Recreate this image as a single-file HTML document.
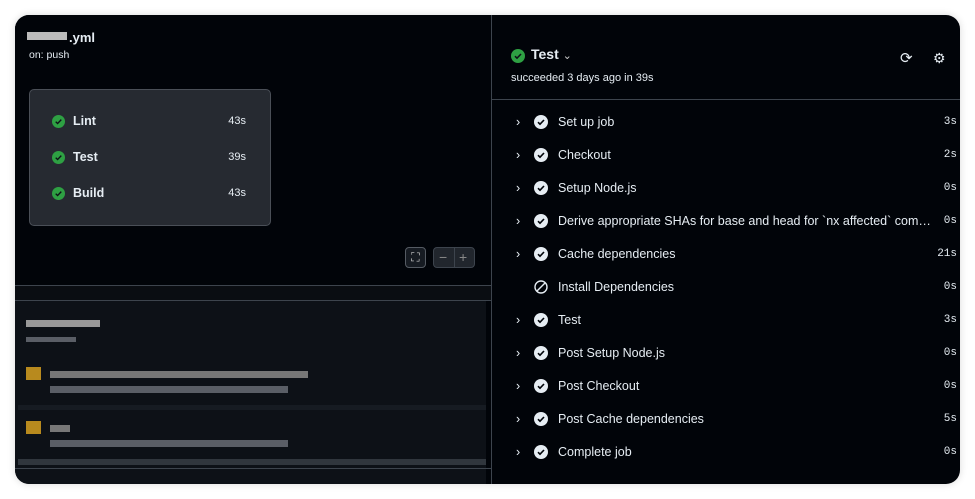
<!DOCTYPE html><html><head><style>
body{margin:0;width:975px;height:499px;background:#fff;overflow:hidden;font-family:"Liberation Sans",sans-serif}
.card{position:absolute;left:15px;top:15px;width:945px;height:469px;border-radius:14px;background:#010409;overflow:hidden;box-shadow:0 0 8px rgba(0,0,0,.15)}
.t{position:absolute;color:#e6edf3}
.jobs{position:absolute;left:14px;top:74px;width:240px;height:135px;background:#262a31;border:1px solid #4a4f57;border-radius:5px}
.jr{position:absolute;left:22px;font-size:12.5px;font-weight:bold;color:#e6edf3}
.jr svg{position:absolute;left:0;top:0}
.jr span{position:absolute;left:21px;top:-1px}
.jr b{position:absolute;left:154px;top:0;font-weight:normal;font-size:11px;width:40px;text-align:right}
.blur{position:absolute;background:#5a5e66;height:7px}
.step{position:absolute;left:492px;width:453px;height:33px;color:#e6edf3;font-size:12.5px}
.step .ch{position:absolute;left:9px;top:10px}
.step svg{position:absolute;left:27px;top:10px}
.step .nm{position:absolute;left:51px;top:10px;white-space:nowrap;width:383px;overflow:hidden;text-overflow:ellipsis}
.step .tm{position:absolute;right:3px;top:11px;font-family:"Liberation Mono",monospace;font-size:11px}
</style></head><body><div class="card">
<svg width="0" height="0" style="position:absolute"><defs>
<symbol id="wc" viewBox="0 0 14 14"><circle cx="7" cy="7" r="7" fill="#e6edf3"/><path d="M4 7.2l2 2 4-4.2" stroke="#010409" stroke-width="1.6" fill="none"/></symbol>
<symbol id="gc" viewBox="0 0 14 14"><circle cx="7" cy="7" r="7" fill="#2ea043"/><path d="M4 7.2l2 2 4-4.2" stroke="#0d1117" stroke-width="1.5" fill="none"/></symbol>
</defs></svg>
<div style="position:absolute;left:0;top:0;width:476px;height:270px;background:#010409;border-bottom:1px solid #3d444d"></div>
<div style="position:absolute;left:0;top:271px;width:476px;height:14px;background:#0a0d12;border-bottom:1px solid #3d444d"></div>
<div style="position:absolute;left:0;top:286px;width:471px;height:183px;background:#0d1117"></div>
<div style="position:absolute;left:3px;top:390px;width:468px;height:5px;background:#161b22"></div>
<div style="position:absolute;left:3px;top:444px;width:468px;height:6px;background:#30363d"></div>
<div style="position:absolute;left:0;top:453px;width:476px;height:1px;background:#3d444d"></div>
<div style="position:absolute;left:476px;top:0;width:1px;height:469px;background:#3d444d"></div>
<div class="blur" style="left:12px;top:17px;width:40px;height:8px;background:#bbb"></div>
<div class="t" style="left:54px;top:15px;font-size:13px;font-weight:bold">.yml</div>
<div class="t" style="left:14px;top:34px;font-size:10.5px">on: push</div>
<div class="jobs">
<div class="jr" style="top:25px"><svg width="13" height="13"><use href="#gc"/></svg><span>Lint</span><b>43s</b></div>
<div class="jr" style="top:61px"><svg width="13" height="13"><use href="#gc"/></svg><span>Test</span><b>39s</b></div>
<div class="jr" style="top:97px"><svg width="13" height="13"><use href="#gc"/></svg><span>Build</span><b>43s</b></div>
</div>
<div style="position:absolute;left:390px;top:232px;width:19px;height:19px;border:1px solid #555b63;border-radius:4px;background:#161b22;color:#ccc;font-size:12px;text-align:center;line-height:19px">⛶</div>
<div style="position:absolute;left:418px;top:232px;width:40px;height:19px;border:1px solid #3d444d;border-radius:4px;background:#21262d;color:#888;font-size:14px;line-height:18px"><span style="position:absolute;left:5px">−</span><span style="position:absolute;left:20px;top:0;width:1px;height:19px;background:#3d444d"></span><span style="position:absolute;left:25px">+</span></div>
<div class="blur" style="left:11px;top:305px;width:74px;background:#999"></div>
<div class="blur" style="left:11px;top:322px;width:50px;height:5px"></div>
<div style="position:absolute;left:11px;top:352px;width:15px;height:13px;background:#b88a1e"></div>
<div class="blur" style="left:35px;top:356px;width:258px;background:#777"></div>
<div class="blur" style="left:35px;top:371px;width:238px"></div>
<div style="position:absolute;left:11px;top:406px;width:15px;height:13px;background:#b88a1e"></div>
<div class="blur" style="left:35px;top:410px;width:20px;background:#777"></div>
<div class="blur" style="left:35px;top:425px;width:238px"></div>
<svg style="position:absolute;left:496px;top:34px" width="14" height="14"><use href="#gc"/></svg>
<div class="t" style="left:516px;top:31px;font-size:14px;font-weight:bold">Test <span style="font-weight:normal;font-size:11px;color:#ccc">⌄</span></div>
<div class="t" style="left:496px;top:57px;font-size:11px">succeeded 3 days ago in 39s</div>
<div class="t" style="left:885px;top:34px;font-size:15px">⟳</div>
<div class="t" style="left:918px;top:35px;font-size:14px">⚙</div>
<div style="position:absolute;left:477px;top:84px;width:468px;height:1px;background:#3d444d"></div>
<div class="step" style="top:90px"><span class="ch">›</span><svg width="14" height="14"><use href="#wc"/></svg><span class="nm">Set up job</span><span class="tm">3s</span></div>
<div class="step" style="top:123px"><span class="ch">›</span><svg width="14" height="14"><use href="#wc"/></svg><span class="nm">Checkout</span><span class="tm">2s</span></div>
<div class="step" style="top:156px"><span class="ch">›</span><svg width="14" height="14"><use href="#wc"/></svg><span class="nm">Setup Node.js</span><span class="tm">0s</span></div>
<div class="step" style="top:189px"><span class="ch">›</span><svg width="14" height="14"><use href="#wc"/></svg><span class="nm">Derive appropriate SHAs for base and head for `nx affected` comman…</span><span class="tm">0s</span></div>
<div class="step" style="top:222px"><span class="ch">›</span><svg width="14" height="14"><use href="#wc"/></svg><span class="nm">Cache dependencies</span><span class="tm">21s</span></div>
<div class="step" style="top:255px"><svg width="14" height="14" viewBox="0 0 14 14"><circle cx="7" cy="7" r="6" stroke="#e6edf3" stroke-width="1.4" fill="none"/><path d="M3 11L11 3" stroke="#e6edf3" stroke-width="1.4"/></svg><span class="nm">Install Dependencies</span><span class="tm">0s</span></div>
<div class="step" style="top:288px"><span class="ch">›</span><svg width="14" height="14"><use href="#wc"/></svg><span class="nm">Test</span><span class="tm">3s</span></div>
<div class="step" style="top:321px"><span class="ch">›</span><svg width="14" height="14"><use href="#wc"/></svg><span class="nm">Post Setup Node.js</span><span class="tm">0s</span></div>
<div class="step" style="top:354px"><span class="ch">›</span><svg width="14" height="14"><use href="#wc"/></svg><span class="nm">Post Checkout</span><span class="tm">0s</span></div>
<div class="step" style="top:387px"><span class="ch">›</span><svg width="14" height="14"><use href="#wc"/></svg><span class="nm">Post Cache dependencies</span><span class="tm">5s</span></div>
<div class="step" style="top:420px"><span class="ch">›</span><svg width="14" height="14"><use href="#wc"/></svg><span class="nm">Complete job</span><span class="tm">0s</span></div>
</div></body></html>
